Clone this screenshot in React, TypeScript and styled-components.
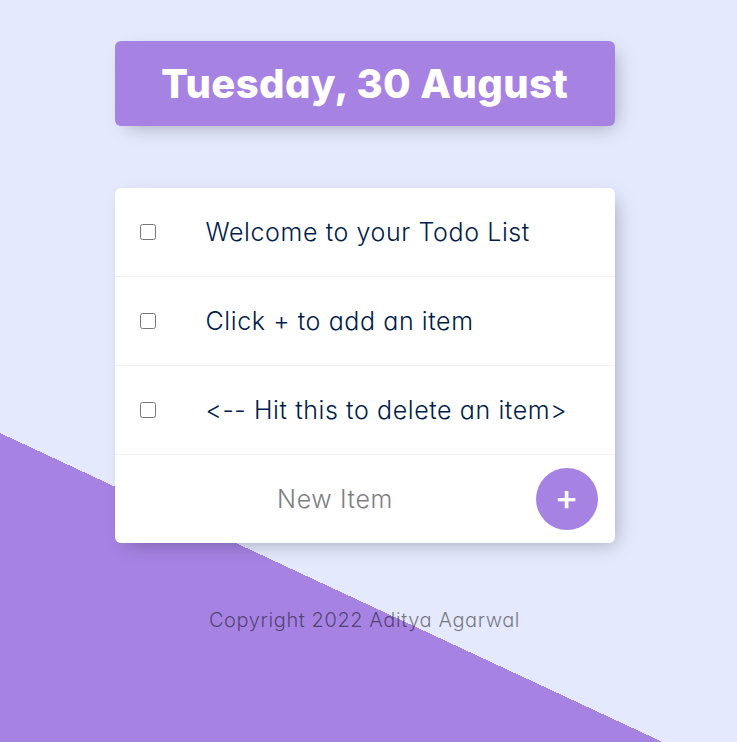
import styled, { createGlobalStyle } from 'styled-components'

const GlobalStyle = createGlobalStyle`
    html, body {
        margin: 0;
        padding: 0;
    }
    body {
        font-family: Inter, "Noto Sans", sans-serif;
        font-feature-settings: "calt" 0, "liga" 0, "cv11" 1;
    }
`

const Page = styled.div`
    min-height: 100vh;
    box-sizing: border-box;
    padding: 41px 8px 40px 0;
    background-image: linear-gradient(25deg, #a683e3 280px, #e4e9fd 280px);
`

const Box = styled.div`
    width: 500px;
    margin: 0 auto 62px;
    background: white;
    border-radius: 6px;
    box-shadow: 6px 6px 19px -6px rgba(0, 0, 0, 0.3);
    overflow: hidden;
`

const Heading = styled(Box)`
    background-color: #a683e3;
    text-align: center;
`

const Title = styled.h1`
    margin: 0;
    padding: 12px;
    font-size: 40px;
    line-height: 61px;
    font-weight: 800;
    color: #fff;
    letter-spacing: 0.4px;
`

const Item = styled.div`
    min-height: 88px;
    display: flex;
    align-items: center;
    border-bottom: 1px solid #f1f1f1;

    &:last-child {
        border-bottom: 0;
    }
`

const Check = styled.input`
    width: 16px;
    height: 16px;
    margin: 25px;
    flex-shrink: 0;
`

const Text = styled.p`
    margin: 0;
    padding: 25px;
    font-size: 25px;
    font-weight: 300;
    letter-spacing: 0.6px;
    color: #00204a;
`

const Form = styled.form`
    display: flex;
    align-items: center;
    margin-left: 25px;
`

const NewInput = styled.input`
    text-align: center;
    height: 75px;
    border: none;
    background: transparent;
    font-family: inherit;
    font-feature-settings: inherit;
    font-size: 25px;
    font-weight: 300;
    letter-spacing: 0.6px;
    width: 391px;
    padding: 0;

    &::placeholder {
        color: grey;
        opacity: 1;
    }

    &:focus {
        outline: none;
    }
`

const AddButton = styled.button`
    width: 62px;
    height: 62px;
    border-radius: 50%;
    border: 0;
    background-color: #a683e3;
    color: #fff;
    font-family: inherit;
    font-size: 36px;
    font-weight: 500;
    line-height: 1;
    padding: 0 0 5px;
    margin-left: 5px;
`

const Footer = styled.footer`
    text-align: center;
    color: rgba(0, 0, 0, 0.5);
    font-size: 20px;
    font-weight: 300;
    letter-spacing: 0.6px;
    line-height: 30px;
`

const items = [
    'Welcome to your Todo List',
    'Click + to add an item',
    '<-- Hit this to delete an item>',
]

const App = () => {
  return (
    <>
      <GlobalStyle />
      <Page>
        <Heading>
          <Title>Tuesday, 30 August</Title>
        </Heading>
        <Box>
          {items.map((item) => (
            <Item key={item}>
              <Check type="checkbox" />
              <Text>{item}</Text>
            </Item>
          ))}
          <Item>
            <Form onSubmit={(e) => e.preventDefault()}>
              <NewInput type="text" placeholder="New Item" autoComplete="off" />
              <AddButton type="submit">+</AddButton>
            </Form>
          </Item>
        </Box>
        <Footer>Copyright 2022 Aditya Agarwal</Footer>
      </Page>
    </>
  )
}

export default App
